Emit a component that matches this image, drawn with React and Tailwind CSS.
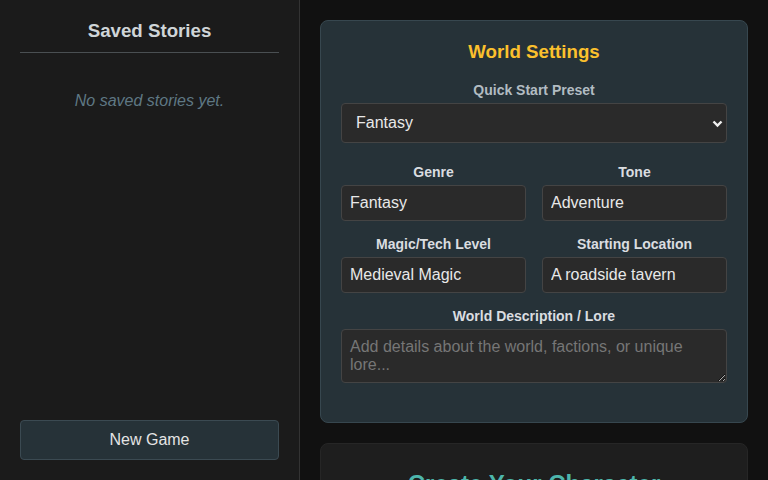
import { useState } from "react";

const PRESETS = ["Fantasy", "Sci-Fi", "Cyberpunk", "Post-Apocalyptic", "Horror", "Mystery"];

function Field({ label, value, onChange }) {
  return (
    <div className="flex flex-col">
      <label className="mb-[5px] text-center text-sm font-bold leading-4 text-[#dadde0]">
        {label}
      </label>
      <input
        value={value}
        onChange={(e) => onChange(e.target.value)}
        className="h-9 w-full rounded border border-[#444] bg-[#2a2a2a] px-2 text-base text-[#e8e8e8] outline-none"
      />
    </div>
  );
}

function Sidebar() {
  return (
    <aside className="flex h-full w-[300px] shrink-0 flex-col border-r border-[#333] bg-[#1b1b1b] p-5">
      <h2 className="border-b border-[#4a4f52] pb-[11px] pt-px text-center text-[18.7px] font-bold leading-5 text-[#cfd5d8]">
        Saved Stories
      </h2>
      <p className="mt-[39px] text-center text-base italic leading-[18px] text-[#5f7884]">
        No saved stories yet.
      </p>
      <div className="flex-1" />
      <button className="h-10 w-full rounded border border-[#3b4a52] bg-[#263238] text-base text-[#e4e4e4]">
        New Game
      </button>
    </aside>
  );
}

function WorldSettings() {
  const [preset, setPreset] = useState("Fantasy");
  const [genre, setGenre] = useState("Fantasy");
  const [tone, setTone] = useState("Adventure");
  const [level, setLevel] = useState("Medieval Magic");
  const [location, setLocation] = useState("A roadside tavern");
  const [lore, setLore] = useState("");

  return (
    <section className="rounded-lg border border-[#37474f] bg-[#263238] px-5 pb-[39px] pt-5">
      <h2 className="mb-5 mt-px text-center text-[18.7px] font-bold leading-5 text-[#fbc02d]">
        World Settings
      </h2>

      <label className="mb-[5px] block text-center text-sm font-bold leading-4 text-[#b2bcc2]">
        Quick Start Preset
      </label>
      <div className="relative">
        <select
          value={preset}
          onChange={(e) => setPreset(e.target.value)}
          className="h-10 w-full appearance-none rounded border border-[#444] bg-[#2a2a2a] pl-[14px] text-base text-[#e8e8e8] outline-none"
        >
          {PRESETS.map((p) => (
            <option key={p}>{p}</option>
          ))}
        </select>
        <svg
          className="pointer-events-none absolute right-[4px] top-[16px] h-[9px] w-[11px]"
          viewBox="0 0 11 9"
          fill="none"
          stroke="#f0f0f0"
          strokeWidth="2.4"
        >
          <path d="M1.5 2.5l4 4 4-4" />
        </svg>
      </div>

      <div className="mt-[21px] grid grid-cols-2 gap-x-4 gap-y-[15px]">
        <Field label="Genre" value={genre} onChange={setGenre} />
        <Field label="Tone" value={tone} onChange={setTone} />
        <Field label="Magic/Tech Level" value={level} onChange={setLevel} />
        <Field label="Starting Location" value={location} onChange={setLocation} />
      </div>

      <label className="mb-[5px] mt-[15px] block text-center text-sm font-bold leading-4 text-[#dadde0]">
        World Description / Lore
      </label>
      <textarea
        value={lore}
        onChange={(e) => setLore(e.target.value)}
        placeholder="Add details about the world, factions, or unique lore..."
        className="block h-[54px] w-full rounded border border-[#444] bg-[#2a2a2a] px-2 py-2 text-base leading-[18px] text-[#e8e8e8] outline-none placeholder:text-[#767676]"
      />
    </section>
  );
}

export default function App() {
  return (
    <div
      className="flex h-screen w-full overflow-hidden bg-[#111] text-[#e0e0e0]"
      style={{ fontFamily: '"Liberation Sans", Arial, sans-serif' }}
    >
      <Sidebar />
      <main className="flex-1 overflow-hidden p-5">
        <div className="flex flex-col gap-5">
          <WorldSettings />
          <section className="rounded-lg border border-[#262626] bg-[#1e1e1e] p-5">
            <h2 className="mt-[6px] text-center text-2xl font-bold leading-7 text-[#4db6ac]">
              Create Your Character
            </h2>
            <div className="h-64" />
          </section>
        </div>
      </main>
    </div>
  );
}
